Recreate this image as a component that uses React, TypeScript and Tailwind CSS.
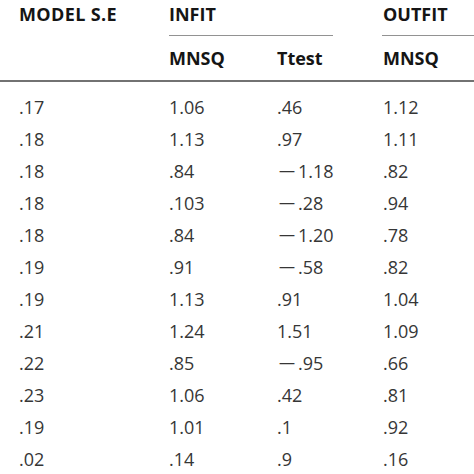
const rows: [string, string, string, string][] = [
  ['.17', '1.06', '.46', '1.12'],
  ['.18', '1.13', '.97', '1.11'],
  ['.18', '.84', '\u22121.18', '.82'],
  ['.18', '.103', '\u2212.28', '.94'],
  ['.18', '.84', '\u22121.20', '.78'],
  ['.19', '.91', '\u2212.58', '.82'],
  ['.19', '1.13', '.91', '1.04'],
  ['.21', '1.24', '1.51', '1.09'],
  ['.22', '.85', '\u2212.95', '.66'],
  ['.23', '1.06', '.42', '.81'],
  ['.19', '1.01', '.1', '.92'],
  ['.02', '.14', '.9', '.16'],
];

// the typeset minus is long and set off from the number
function Signed({ value }: { value: string }) {
  if (!value.startsWith('\u2212')) return <>{value}</>;
  return (
    <span className="pl-[1px]">
      <span className="inline-block w-[20px]">
        <span className="inline-block origin-left scale-x-[1.75]">{'\u2212'}</span>
      </span>
      {value.slice(1)}
    </span>
  );
}

export default function App() {
  return (
    <div
      className="w-[474px] h-[474px] overflow-hidden bg-white text-[18px]"
      style={{ fontFamily: '"Open Sans", "Liberation Sans", sans-serif' }}
    >
      {/* header */}
      <div className="grid grid-cols-[169px_108px_106px_91px] font-bold text-[#151515]">
        <div className="pl-[19px] h-[36px] pt-[1px] leading-[27px] tracking-[0.02em]">MODEL S.E</div>
        <div className="col-span-2 mr-[50px] h-[36px] pt-[1px] leading-[27px] border-b-[1.5px] border-[#929292]">INFIT</div>
        <div className="pl-[1px] ml-[-1px] h-[36px] pt-[1px] leading-[27px] border-b-[1.5px] border-[#929292]">OUTFIT</div>

        <div className="h-[46px] border-b-2 border-[#727272]" />
        <div className="h-[46px] pt-[9px] leading-[26px] border-b-2 border-[#727272]">MNSQ</div>
        <div className="h-[46px] pt-[9px] leading-[26px] border-b-2 border-[#727272]">Ttest</div>
        <div className="h-[46px] pt-[9px] leading-[26px] border-b-2 border-[#727272]">MNSQ</div>
      </div>

      {/* body */}
      <div className="pt-[9px] text-[#363636]">
        {rows.map((r, i) => (
          <div key={i} className="grid grid-cols-[169px_108px_106px_91px] h-[32px] leading-[32px]">
            <div className="pl-[19px]">{r[0]}</div>
            <div>{r[1]}</div>
            <div>
              <Signed value={r[2]} />
            </div>
            <div>{r[3]}</div>
          </div>
        ))}
      </div>
    </div>
  );
}
